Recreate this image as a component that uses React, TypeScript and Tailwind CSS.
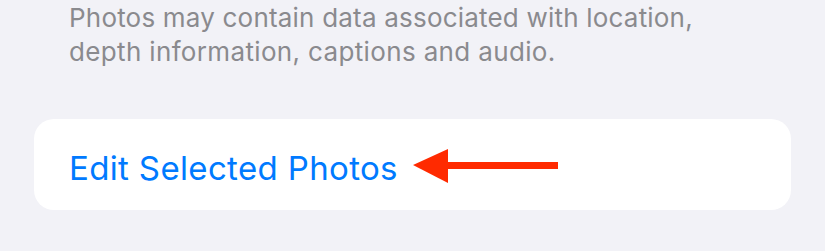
import React from "react";

export default function App() {
  return (
    <div
      className="w-[825px] h-[251px] bg-[#f2f2f7] overflow-hidden"
      style={{ fontFamily: "Inter, 'Noto Sans', sans-serif" }}
    >
      <div className="pl-[69px] text-[26px] leading-[34px] text-[#8a8a8e] tracking-[0.2px]">
        <div className="pt-[1px]">Photos may contain data associated with location,</div>
        <div className="tracking-[0.35px]">depth information, captions and audio.</div>
      </div>
      <div className="mt-[50px] mx-[34px] w-[757px] h-[91px] bg-white rounded-[20px] flex items-start pl-[35px]">
        <span className="mt-[33px] text-[33px] text-[#007aff] leading-none tracking-[0.35px]">Edit Selected Photos</span>
        <svg className="ml-[15px] mt-[27px]" width="146" height="38" viewBox="0 0 146 38">
          <polygon points="0,19 35,3 35,37" fill="#ff2a00" />
          <rect x="34" y="16" width="111" height="7" fill="#ff2a00" />
        </svg>
      </div>
    </div>
  );
}
